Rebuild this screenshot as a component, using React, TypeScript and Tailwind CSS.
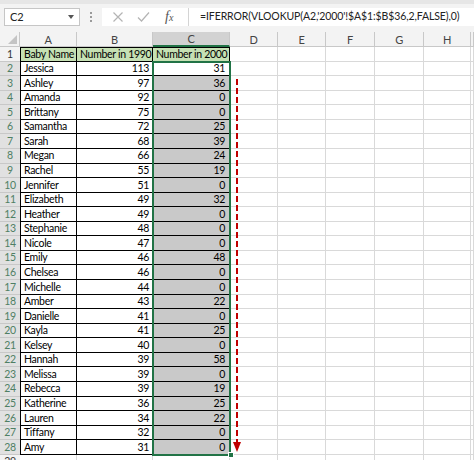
import React from "react";

type Row = [string, number, number];

const data: Row[] = [
  ["Jessica", 113, 31],
  ["Ashley", 97, 36],
  ["Amanda", 92, 0],
  ["Brittany", 75, 0],
  ["Samantha", 72, 25],
  ["Sarah", 68, 39],
  ["Megan", 66, 24],
  ["Rachel", 55, 19],
  ["Jennifer", 51, 0],
  ["Elizabeth", 49, 32],
  ["Heather", 49, 0],
  ["Stephanie", 48, 0],
  ["Nicole", 47, 0],
  ["Emily", 46, 48],
  ["Chelsea", 46, 0],
  ["Michelle", 44, 0],
  ["Amber", 43, 22],
  ["Danielle", 41, 0],
  ["Kayla", 41, 25],
  ["Kelsey", 40, 0],
  ["Hannah", 39, 58],
  ["Melissa", 39, 0],
  ["Rebecca", 39, 19],
  ["Katherine", 36, 25],
  ["Lauren", 34, 22],
  ["Tiffany", 32, 0],
  ["Amy", 31, 0],
];

const cols = "grid grid-cols-[20px_57px_76px_77px_48px_48px_49px_49px_47px_3px]";
const empty = "border-r border-b border-[#d9d9d9]";

function FormulaBar() {
  return (
    <div className="h-[32px] bg-[#f3f3f3] border-t-[4px] border-[#e6e6e6] flex items-start pt-[4px]">
      <div className="shrink-0 ml-[4px] w-[76px] h-[18px] bg-white border border-[#c6c6c6] flex items-center justify-between pl-[5px] pr-[5px] text-[11px] tracking-[-0.2px] text-[#222]">
        <span>C2</span>
        <svg width="6" height="4" viewBox="0 0 6 4">
          <path d="M0 0h6L3 4z" fill="#555" />
        </svg>
      </div>
      <div className="shrink-0 w-[22px] h-[18px] flex flex-col items-center justify-center gap-[2px]">
        <span className="w-[2px] h-[2px] bg-[#9a9a9a]" />
        <span className="w-[2px] h-[2px] bg-[#9a9a9a]" />
        <span className="w-[2px] h-[2px] bg-[#9a9a9a]" />
      </div>
      <div className="shrink-0 w-[86px] h-[18px] bg-white flex items-center">
        <svg className="ml-[10px]" width="12" height="12" viewBox="0 0 12 12">
          <path d="M1.5 1.5l9 9M10.5 1.5l-9 9" stroke="#b4b4b4" strokeWidth="1.2" />
        </svg>
        <svg className="ml-[13px]" width="13" height="12" viewBox="0 0 13 12">
          <path d="M1 6.5l3.5 3.5L12 1.5" stroke="#b4b4b4" strokeWidth="1.2" fill="none" />
        </svg>
        <span className="ml-[15px] font-['Liberation_Serif',serif] italic text-[14px] text-[#555] leading-none">
          f<span className="text-[10px]">x</span>
        </span>
      </div>
      <div className="flex-1 min-w-0 h-[18px] bg-white border-l border-[#d4d4d4] flex items-center pl-[11px] text-[10.5px] tracking-[-0.1px] text-[#222] whitespace-nowrap overflow-hidden">
        =IFERROR(VLOOKUP(A2,'2000'!$A$1:$B$36,2,FALSE),0)
      </div>
    </div>
  );
}

function ColumnHeaders() {
  const letters = ["A", "B", "C", "D", "E", "F", "G", "H", ""];
  return (
    <div className={`${cols} h-[15px] text-[11px] text-[#444]`}>
      <div className="bg-[#f3f3f3] border-r border-b border-[#c8c8c8] relative">
        <svg className="absolute right-[2px] bottom-[2px]" width="9" height="9" viewBox="0 0 9 9">
          <path d="M9 0v9H0z" fill="#c4c4c4" />
        </svg>
      </div>
      {letters.map((l, i) =>
        l === "C" ? (
          <div
            key={i}
            className="bg-[#d2d2d2] border-r border-[#c8c8c8] border-b-2 border-b-[#217346] flex items-center justify-center leading-none"
          >
            {l}
          </div>
        ) : (
          <div
            key={i}
            className="bg-[#f3f3f3] border-r border-b border-[#c8c8c8] flex items-center justify-center leading-none"
          >
            {l}
          </div>
        )
      )}
    </div>
  );
}

function RowHeader({ n, selected }: { n: number; selected: boolean }) {
  return (
    <div
      className={
        selected
          ? "bg-[#e1e1e1] text-[#4f7f64] border-b border-[#c8c8c8] flex items-center justify-center leading-none"
          : "bg-[#f3f3f3] text-[#333] border-b border-[#c8c8c8] flex items-center justify-center leading-none"
      }
    >
      {n}
    </div>
  );
}

function EmptyCells() {
  return (
    <>
      {[0, 1, 2, 3, 4, 5].map((i) => (
        <div key={i} className={empty} />
      ))}
    </>
  );
}

function Sheet() {
  return (
    <div className="text-[10.5px] tracking-[-0.3px] text-black">
      <ColumnHeaders />
      <div className={`${cols} auto-rows-[14.57px]`}>
        <RowHeader n={1} selected={false} />
        <div className="bg-[#c6e0b4] border border-black flex items-center px-[3px] leading-none whitespace-nowrap">
          Baby Name
        </div>
        <div className="bg-[#c6e0b4] border-t border-r border-b border-black flex items-center px-[3px] leading-none whitespace-nowrap">
          Number in 1990
        </div>
        <div className="bg-[#c6e0b4] border-t border-r border-b border-black flex items-center px-[3px] leading-none whitespace-nowrap">
          Number in 2000
        </div>
        <EmptyCells />
        {data.map(([name, a, b], i) => (
          <React.Fragment key={name}>
            <RowHeader n={i + 2} selected={true} />
            <div className="bg-white border-l border-r border-b border-black flex items-center px-[3px] leading-none">
              {name}
            </div>
            <div className="bg-white border-r border-b border-black flex items-center justify-end px-[3px] leading-none">
              {a}
            </div>
            <div
              className={
                i === 0
                  ? "bg-white border-r border-b border-black flex items-center justify-end px-[4px] leading-none"
                  : "bg-[#c9c9c9] border-r border-b border-black flex items-center justify-end px-[4px] leading-none"
              }
            >
              {b}
            </div>
            <EmptyCells />
          </React.Fragment>
        ))}
        <RowHeader n={29} selected={false} />
        <div className={empty} />
        <div className={empty} />
        <div className={empty} />
        <EmptyCells />
      </div>
    </div>
  );
}

export default function App() {
  return (
    <div className="relative w-[474px] h-[460px] overflow-hidden bg-white font-['Lato',sans-serif]">
      <FormulaBar />
      <Sheet />
      {/* selection C2:C28 */}
      <div className="absolute left-[152px] top-[61px] w-[79px] h-[395px] border-2 border-[#217346] pointer-events-none" />
      <div className="absolute left-[228px] top-[452px] w-[6px] h-[6px] bg-[#217346] border border-white" />
      {/* red fill arrow */}
      <svg className="absolute left-[232px] top-[76px]" width="10" height="380" viewBox="0 0 10 380">
        <line x1="5" y1="3" x2="5" y2="368" stroke="#c00000" strokeWidth="2" strokeDasharray="6 3" />
        <path d="M1 366h8l-4 10z" fill="#c00000" />
      </svg>
    </div>
  );
}
